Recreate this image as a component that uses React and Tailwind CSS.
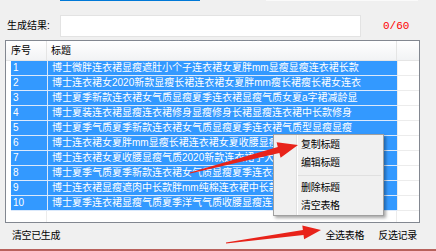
import React from 'react';

const titles = [
  "博士微胖连衣裙显瘦遮肚小个子连衣裙女夏胖mm显瘦显瘦连衣裙长款",
  "博士连衣裙女2020新款显瘦长裙连衣裙女夏胖mm瘦长裙瘦长裙女连衣",
  "博士夏季新款连衣裙女气质显瘦夏季连衣裙显瘦气质女夏a字裙减龄显",
  "博士夏装连衣裙显瘦连衣裙修身显瘦修身长裙显瘦连衣裙中长款修身",
  "博士夏季气质夏季新款连衣裙女气质显瘦夏季连衣裙气质型显瘦显瘦",
  "博士连衣裙女夏胖mm显瘦长裙连衣裙女夏收腰显瘦气质连衣裙女夏装",
  "博士连衣裙女夏收腰显瘦气质2020新款连衣裙子大直连衣裙女夏",
  "博士夏季气质夏季新款连衣裙女气质显瘦夏季连衣裙女夏收腰",
  "博士连衣裙显瘦遮肉中长款胖mm纯棉连衣裙中长款显瘦连衣",
  "博士夏季连衣裙显瘦气质夏季洋气气质收腰显瘦连衣裙女夏",
];

const menuItems = ["复制标题", "编辑标题", null, "删除标题", "清空表格"];

export default function App() {
  return (
    <div className="relative w-[436px] h-[251px] overflow-hidden bg-[#f0f0f0] text-[10px] text-black font-['Liberation_Sans','Noto_Sans_CJK_SC',sans-serif]">
      {/* edges of the buttons above */}
      <div className="flex h-[15px]">
        <div className="ml-[60px] w-[140px] h-px bg-[#0078d7]" />
        <div className="ml-[66px] w-[152px] h-px bg-[#fafafa]" />
      </div>

      {/* result input */}
      <div className="flex items-center h-[22px]">
        <span className="pl-[7px] w-[60px] leading-none">生成结果:</span>
        <div className="w-[301px] h-[22px] bg-white border border-[#e3e3e3]" />
        <span className="ml-[22px] text-[11px] text-[#ff0000] font-['Liberation_Mono',monospace] leading-none">0/60</span>
      </div>

      {/* grid */}
      <div className="mt-[3px] ml-[5px] w-[415px] h-[183px] border border-[#828790] bg-white flex flex-col">
        <div className="flex h-[20px] border-b border-[#e5e5e5] bg-gradient-to-b from-white to-[#f2f3f5]">
          <div className="w-[41px] pl-[5px] flex items-center border-r border-[#e5e5e5]">序号</div>
          <div className="w-[350px] pl-[4px] flex items-center border-r border-[#e5e5e5]">标题</div>
          <div className="flex-1" />
        </div>
        {titles.map((t, i) => (
          <div key={i} className="flex h-[15px]">
            <div className="w-[5px]" />
            <div className="w-[36px] bg-[#3399ff] border-b border-[#dbe9fb] text-white pl-[2px] flex items-center leading-none">{i + 1}</div>
            <div className="w-[350px] bg-[#3399ff] border-l border-b border-[#dbe9fb] text-white pl-[4px] flex items-center leading-none whitespace-nowrap overflow-hidden">{t}</div>
            <div className="flex-1 border-l border-b border-[#ececec]" />
          </div>
        ))}
        <div className="flex flex-1">
          <div className="w-[41px] border-r border-[#ececec]" />
          <div className="w-[350px] border-r border-[#ececec]" />
          <div className="flex-1" />
        </div>
      </div>

      {/* bottom actions */}
      <div className="flex items-center h-[26px] leading-none">
        <span className="ml-[12px] tracking-[-0.4px]">清空已生成</span>
        <span className="ml-auto tracking-[-0.3px]">全选表格</span>
        <span className="ml-[14px] mr-[19px] tracking-[-0.3px]">反选记录</span>
      </div>
      <div className="h-[2px] bg-[#b9615c]" />

      {/* context menu */}
      <div className="absolute left-[273px] top-[134px] w-[111px] h-[82px] bg-[#f0f0f0] border border-[#a0a0a0] shadow-[2px_2px_3px_rgba(0,0,0,0.35)] flex">
        <div className="w-[23px] border-r border-[#e0e0e0]" />
        <div className="flex-1 flex flex-col pt-[1px] border-l border-white">
          {menuItems.map((m, i) =>
            m ? (
              <div key={i} className="h-[18px] pl-[3px] flex items-center leading-none tracking-[-0.3px]">{m}</div>
            ) : (
              <div key={i} className="h-[7px] pt-[3px]">
                <div className="h-px bg-[#e0e0e0] mr-[2px]" />
              </div>
            )
          )}
        </div>
      </div>

      {/* red arrows */}
      <svg className="absolute left-0 top-0" width="436" height="251" viewBox="0 0 436 251">
        <polygon
          fill="#e8231a"
          points="189.9,172.5 277.8,147.1 276.6,142.3 298,145 280.6,157.7 279.4,152.9 190.1,173.5"
        />
        <polygon
          fill="#e8231a"
          points="225.9,242.5 302.9,229.9 302.3,225.5 321,230 304.1,239.3 303.5,234.9 226.1,243.5"
        />
      </svg>
    </div>
  );
}
